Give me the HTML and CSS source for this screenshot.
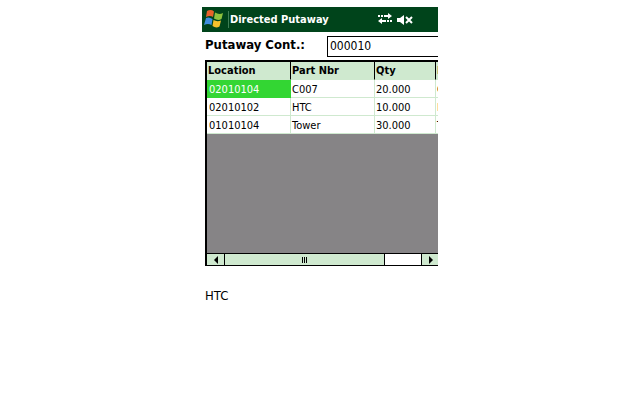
FILE: index.html
```html
<!DOCTYPE html>
<html lang="en">
<head>
    <meta charset="UTF-8">
    <title>Directed Putaway</title>
    <link rel="stylesheet" href="styles.css">
</head>
<body>
    <div class="device">
        <header class="titlebar">
            <svg class="logo" width="22" height="25" viewBox="0 0 22 25">
                <path d="M4 4 Q8 2 11 4.500 L10 10 Q7 8 3 10 Z" fill="#e8622a"/>
                <path d="M12 5.500 Q16 8 20 6 L18.500 12 Q15 14 11 11.500 Z" fill="#8fc23e"/>
                <path d="M3 11 Q6 9.500 9.500 12 L8.500 18 Q5 16 1 18 Z" fill="#3f8fe0"/>
                <path d="M10.500 13 Q14 15 18 13.500 L16.500 19.500 Q13 21.500 9.500 19 Z" fill="#f5c02c"/>
            </svg>
            <span class="divider"></span>
            <span class="title">Directed Putaway</span>
            <svg class="status" width="14" height="13" viewBox="0 0 14 13">
                <path d="M0 2h2v2H0zM3 2h2v2H3zM6 2h4V0l4 3-4 3V4H6zM8 9H4v2l-4-3 4-3v2h4zM9 7h2v2H9zM12 7h2v2h-2z" fill="#fff"/>
            </svg>
            <svg class="sound" width="16" height="10" viewBox="0 0 16 10">
                <path d="M0 3h3l4-3v10L3 7H0z" fill="#fff"/>
                <path d="M9 2l6 6M15 2l-6 6" stroke="#fff" stroke-width="2"/>
            </svg>
        </header>

        <div class="form-row">
            <label class="form-label">Putaway Cont.:</label>
            <div class="form-input">000010</div>
        </div>

        <div class="grid">
            <div class="row head">
                <div class="cell loc">Location</div>
                <div class="cell part">Part Nbr</div>
                <div class="cell qty">Qty</div>
                <div class="cell extra">L</div>
            </div>
            <div class="row selected">
                <div class="cell loc">02010104</div>
                <div class="cell part">C007</div>
                <div class="cell qty">20.000</div>
                <div class="cell extra">C</div>
            </div>
            <div class="row">
                <div class="cell loc">02010102</div>
                <div class="cell part">HTC</div>
                <div class="cell qty">10.000</div>
                <div class="cell extra">H</div>
            </div>
            <div class="row">
                <div class="cell loc">01010104</div>
                <div class="cell part">Tower</div>
                <div class="cell qty">30.000</div>
                <div class="cell extra">T</div>
            </div>
            <div class="empty"></div>
            <div class="scrollbar">
                <div class="arrow left"><span class="tri-left"></span></div>
                <div class="track-on"><span class="grip"></span></div>
                <div class="track-off"></div>
                <div class="arrow right"><span class="tri-right"></span></div>
            </div>
        </div>

        <p class="selected-part">HTC</p>
    </div>
</body>
</html>
```

FILE: styles.css
```css
body {
    margin: 0;
    background: #fff;
    font-family: "DejaVu Sans", sans-serif;
    font-stretch: condensed;
    font-size: 11px;
    color: #000;
}
.device {
    width: 236px;
    margin: 7px 0 0 202px;
    overflow: hidden;
}
.titlebar {
    height: 25px;
    background: #00441b;
    display: flex;
    align-items: center;
    color: #fff;
}
.logo {
    margin-left: 1px;
}
.divider {
    width: 1px;
    height: 17px;
    margin: 0 1px 0 3px;
    background: #3f7f55;
}
.title {
    width: 148px;
    font-size: 11px;
    font-weight: bold;
    white-space: nowrap;
}
.sound {
    margin-left: 5px;
}
.form-row {
    height: 28px;
    display: flex;
    align-items: center;
    padding-left: 3px;
}
.form-label {
    width: 122px;
    margin-bottom: 4px;
    font-size: 13px;
    font-weight: bold;
    white-space: nowrap;
}
.form-input {
    flex: 1;
    height: 19px;
    line-height: 19px;
    padding-left: 2px;
    border: 1px solid #000;
    border-right: 0;
    font-size: 12px;
}
.grid {
    width: 233px;
    margin-left: 3px;
    box-sizing: border-box;
    border-top: 2px solid #000;
    border-left: 2px solid #000;
    border-bottom: 1px solid #000;
}
.row {
    display: flex;
    height: 18px;
    background: #fff;
}
.cell {
    box-sizing: border-box;
    height: 18px;
    line-height: 19px;
    padding-left: 1px;
    border-right: 1px solid #cfe9cf;
    border-bottom: 1px solid #cfe9cf;
    white-space: nowrap;
    overflow: hidden;
}
.loc {
    width: 84px;
    padding-left: 2px;
}
.part {
    width: 84px;
}
.qty {
    width: 61px;
}
.extra {
    border-right: 0;
    flex: 1;
}
.head {
    background: #cfe9cf;
    font-weight: bold;
}
.head .cell {
    line-height: 17px;
    border-right-color: #000;
}
.head .loc {
    padding-left: 1px;
}
.head .extra {
    border-right: 0;
}
.selected .loc {
    background: #33d633;
    color: #fff;
    border-color: #33d633;
}
.empty {
    height: 119px;
    background: #868486;
}
.scrollbar {
    display: flex;
    height: 11px;
    background: #cfe9cf;
    border-top: 1px solid #000;
}
.arrow {
    width: 17px;
    display: flex;
    align-items: center;
    justify-content: center;
}
.left {
    border-right: 1px solid #000;
}
.right {
    border-left: 1px solid #000;
    flex: 1;
    padding-left: 1px;
}
.tri-left {
    border: 4px solid transparent;
    border-left: 0;
    border-right-color: #000;
}
.tri-right {
    border: 4px solid transparent;
    border-right: 0;
    border-left-color: #000;
}
.track-on {
    width: 159px;
    display: flex;
    align-items: center;
    justify-content: center;
}
.grip {
    width: 1px;
    height: 6px;
    background: #000;
    box-shadow: 2px 0 #000, 4px 0 #000;
    margin-right: 4px;
}
.track-off {
    width: 36px;
    background: #fff;
    border-left: 1px solid #000;
}
.selected-part {
    margin: 22px 0 0 3px;
    font-size: 13px;
}
```
